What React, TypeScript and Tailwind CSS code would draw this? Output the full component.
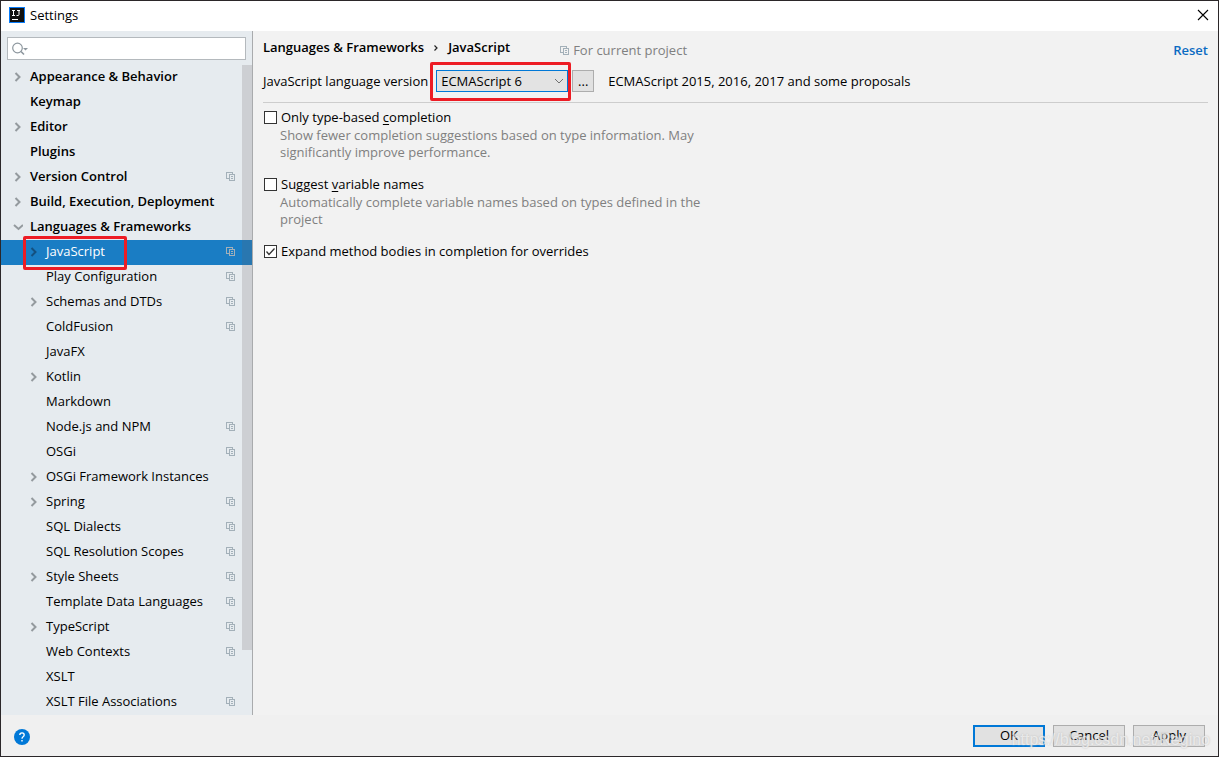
import { useState } from 'react';

type Item = {
  label: string;
  level: 0 | 1;
  arrow?: 'right' | 'down';
  project?: boolean;
};

const items: Item[] = [
  { label: 'Appearance & Behavior', level: 0, arrow: 'right' },
  { label: 'Keymap', level: 0 },
  { label: 'Editor', level: 0, arrow: 'right' },
  { label: 'Plugins', level: 0 },
  { label: 'Version Control', level: 0, arrow: 'right', project: true },
  { label: 'Build, Execution, Deployment', level: 0, arrow: 'right' },
  { label: 'Languages & Frameworks', level: 0, arrow: 'down' },
  { label: 'JavaScript', level: 1, arrow: 'right', project: true },
  { label: 'Play Configuration', level: 1, project: true },
  { label: 'Schemas and DTDs', level: 1, arrow: 'right', project: true },
  { label: 'ColdFusion', level: 1, project: true },
  { label: 'JavaFX', level: 1 },
  { label: 'Kotlin', level: 1, arrow: 'right' },
  { label: 'Markdown', level: 1 },
  { label: 'Node.js and NPM', level: 1, project: true },
  { label: 'OSGi', level: 1, project: true },
  { label: 'OSGi Framework Instances', level: 1, arrow: 'right' },
  { label: 'Spring', level: 1, arrow: 'right', project: true },
  { label: 'SQL Dialects', level: 1, project: true },
  { label: 'SQL Resolution Scopes', level: 1, project: true },
  { label: 'Style Sheets', level: 1, arrow: 'right', project: true },
  { label: 'Template Data Languages', level: 1, project: true },
  { label: 'TypeScript', level: 1, arrow: 'right', project: true },
  { label: 'Web Contexts', level: 1, project: true },
  { label: 'XSLT', level: 1 },
  { label: 'XSLT File Associations', level: 1, project: true },
];

function ProjectIcon() {
  return (
    <svg width="10" height="10" viewBox="0 0 10 10" fill="none" stroke="#a3b0b9" shapeRendering="crispEdges" className="shrink-0">
      <path d="M3 6.5H.5v-6h6V2" />
      <path d="M3.5 2.5h5v6h-5z" />
      <path d="M5 4.5h2M5 6.5h2" />
    </svg>
  );
}

function Arrow({ dir, active }: { dir: 'right' | 'down'; active: boolean }) {
  return (
    <svg width="10" height="10" viewBox="0 0 10 10" fill="none" stroke={active ? '#14507f' : '#949a9e'} strokeWidth="2">
      <path d={dir === 'right' ? 'M2.5 1l4 4-4 4' : 'M1 3l4.500 4L10 3'} />
    </svg>
  );
}

function TreeRow({ item, active, onSelect }: { item: Item; active: boolean; onSelect: () => void }) {
  return (
    <li className="relative">
      <button
        type="button"
        onClick={onSelect}
        className={`flex h-[25px] w-full items-center pr-4 pb-[2px] text-left ${item.level === 0 ? 'pl-3 font-semibold' : 'pl-7'} ${
          active ? 'bg-[#1a7dc4] text-white' : ''
        }`}
      >
        <span className="w-[17px] shrink-0">{item.arrow && <Arrow dir={item.arrow} active={active} />}</span>
        <span className="flex-1 whitespace-nowrap">{item.label}</span>
        {item.project && <ProjectIcon />}
      </button>
      {active && <div className="pointer-events-none absolute -top-1 left-[22px] h-[34px] w-[104px] rounded-xs border-3 border-[#ed1c24]" />}
    </li>
  );
}

function Option({
  id,
  before = '',
  mnemonic = '',
  after,
  hint,
  defaultChecked,
}: {
  id: string;
  before?: string;
  mnemonic?: string;
  after: string;
  hint?: string;
  defaultChecked?: boolean;
}) {
  return (
    <div>
      <div className="flex h-[17px] items-center gap-1">
        <span className="relative h-[13px] w-[13px]">
          <input
            id={id}
            type="checkbox"
            defaultChecked={defaultChecked}
            className="peer block h-[13px] w-[13px] appearance-none border border-[#333] bg-white"
          />
          <svg
            viewBox="0 0 13 13"
            fill="none"
            stroke="#333"
            strokeWidth="1.3"
            className="pointer-events-none absolute inset-0 hidden peer-checked:block"
          >
            <path d="M2.5 6.5l2.5 3 5.5-6" />
          </svg>
        </span>
        <label htmlFor={id}>
          {before}
          <span className="underline underline-offset-2">{mnemonic}</span>
          {after}
        </label>
      </div>
      {hint && <p className="mt-px max-w-[440px] pl-4 leading-[17px] text-[#808080]">{hint}</p>}
    </div>
  );
}

export default function App() {
  const [selected, setSelected] = useState('JavaScript');

  return (
    <div className="flex min-h-screen flex-col border border-[#2b2729] bg-[#f2f2f2] font-['Open_Sans','Noto_Sans',sans-serif] text-[13px] leading-[17px] text-black">
      <header className="flex h-[30px] items-center bg-white px-2 pb-[2px]">
        <svg width="16" height="16" viewBox="0 0 16 16">
          <rect width="16" height="16" fill="#087cfa" />
          <rect x="1" y="1" width="14" height="14" fill="#111" />
          <path d="M3 3.5h3M4.5 3.5v5M3 8.5h3M8 3.5h3M10 3.5v4q0 1-1 1H7.5" stroke="#fff" fill="none" />
          <path d="M3 12.5h6" stroke="#fff" />
        </svg>
        <h1 className="ml-[5px] flex-1 text-[13px]">Settings</h1>
        <button type="button" aria-label="Close" className="p-px">
          <svg width="12" height="12" viewBox="0 0 12 12" stroke="#000" strokeWidth="1.1">
            <path d="M1 1l10 10M11 1L1 11" />
          </svg>
        </button>
      </header>

      <div className="flex flex-1">
        <nav className="w-[252px] shrink-0 border-r border-[#a9abad] bg-[#e6ebef]">
          <div className="px-[6px] pt-[6px] pb-[5px]">
            <div className="flex h-[23px] items-center border border-[#b4b9bd] bg-white pl-1">
              <svg width="17" height="14" viewBox="0 0 17 14" fill="none" stroke="#8d979e">
                <circle cx="5.5" cy="6" r="4.8" strokeWidth="1.2" />
                <path d="M9 9.5l3 3" strokeWidth="1.6" />
                <path d="M11 6h5l-2.5 2.5z" fill="#8d979e" stroke="none" />
              </svg>
              <input type="text" aria-label="Search settings" className="min-w-0 flex-1 outline-none" />
            </div>
          </div>
          <div className="relative">
            <ul>
              {items.map((item) => (
                <TreeRow
                  key={item.label}
                  item={item}
                  active={item.label === selected}
                  onSelect={() => setSelected(item.label)}
                />
              ))}
            </ul>
            <div className="pointer-events-none absolute top-0 right-0 h-[90%] w-[10px] bg-[#6a6064]/20" />
          </div>
        </nav>

        <main className="min-w-0 flex-1 px-[10px]">
          <div className="flex h-[33px] items-center">
            <h2 className="flex items-center text-[13px] font-semibold whitespace-nowrap">
              Languages &amp; Frameworks
              <svg width="6" height="8" viewBox="0 0 6 8" fill="none" stroke="#222" strokeWidth="1.2" className="mx-[9px]">
                <path d="M1.5 1.5L4 4 1.5 6.5" />
              </svg>
              JavaScript
            </h2>
            <p className="mt-[6px] ml-[50px] flex flex-1 items-center gap-[3px] text-[#808080]">
              <ProjectIcon />
              For current project
            </p>
            <a href="#reset" className="mt-[6px] font-semibold text-[#0b6bc2]">
              Reset
            </a>
          </div>

          <div className="flex h-[39px] items-center border-b border-[#cdcdcd] pb-1">
            <label htmlFor="version" className="whitespace-nowrap">
              JavaScript language version
            </label>
            <div className="relative ml-2">
              <select
                id="version"
                className="block h-[22px] w-[132px] appearance-none border border-[#0078d7] bg-[#e3e3e3] pl-1 outline-none"
              >
                <option>ECMAScript 6</option>
              </select>
              <svg
                width="10"
                height="6"
                viewBox="0 0 10 6"
                fill="none"
                stroke="#707070"
                className="pointer-events-none absolute top-2 right-1"
              >
                <path d="M1 1l4 4 4-4" />
              </svg>
              <div className="pointer-events-none absolute -top-2 -right-[3px] -bottom-[9px] -left-[6px] rounded-xs border-3 border-[#ed1c24]" />
            </div>
            <button type="button" className="ml-1 h-[22px] w-[22px] border border-[#adadad] bg-[#e1e1e1]">
              ...
            </button>
            <span className="ml-[14px]">ECMAScript 2015, 2016, 2017 and some proposals</span>
          </div>

          <div className="flex flex-col gap-[15px] pt-[6px] pl-px">
            <Option
              id="type-based"
              before="Only type-based "
              mnemonic="c"
              after="ompletion"
              hint="Show fewer completion suggestions based on type information. May significantly improve performance."
            />
            <Option
              id="variable-names"
              before="Suggest "
              mnemonic="v"
              after="ariable names"
              hint="Automatically complete variable names based on types defined in the project"
            />
            <Option id="expand-bodies" after="Expand method bodies in completion for overrides" defaultChecked />
          </div>
        </main>
      </div>

      <footer className="relative flex h-[41px] items-center gap-2 bg-[#f0f0f0] px-[13px]">
        <button type="button" aria-label="Help" className="mt-[3px]">
          <svg width="16" height="16" viewBox="0 0 16 16" fill="none" stroke="#fff">
            <circle cx="8" cy="8" r="8" fill="#0078d7" stroke="none" />
            <path d="M5.8 6q0-2.2 2.2-2.2T10.2 6q0 1-1.1 1.7T8 9.8" strokeWidth="1.3" />
            <path d="M8 11v1.5" strokeWidth="1.4" />
          </svg>
        </button>
        <div className="flex-1" />
        <button type="button" className="h-[22px] w-[72px] border-2 border-[#0078d7] bg-[#e1e1e1]">
          OK
        </button>
        <button type="button" className="h-[22px] w-[72px] border border-[#adadad] bg-[#e1e1e1]">
          Cancel
        </button>
        <button type="button" className="h-[22px] w-[72px] border border-[#adadad] bg-[#e1e1e1]">
          Apply
        </button>
        <span className="pointer-events-none absolute right-2 bottom-2 font-['Liberation_Sans',sans-serif] text-[16px] text-white/60 [text-shadow:0_0_2px_#bbb]">
          https://blog.csdn.net/Regino
        </span>
      </footer>
    </div>
  );
}
